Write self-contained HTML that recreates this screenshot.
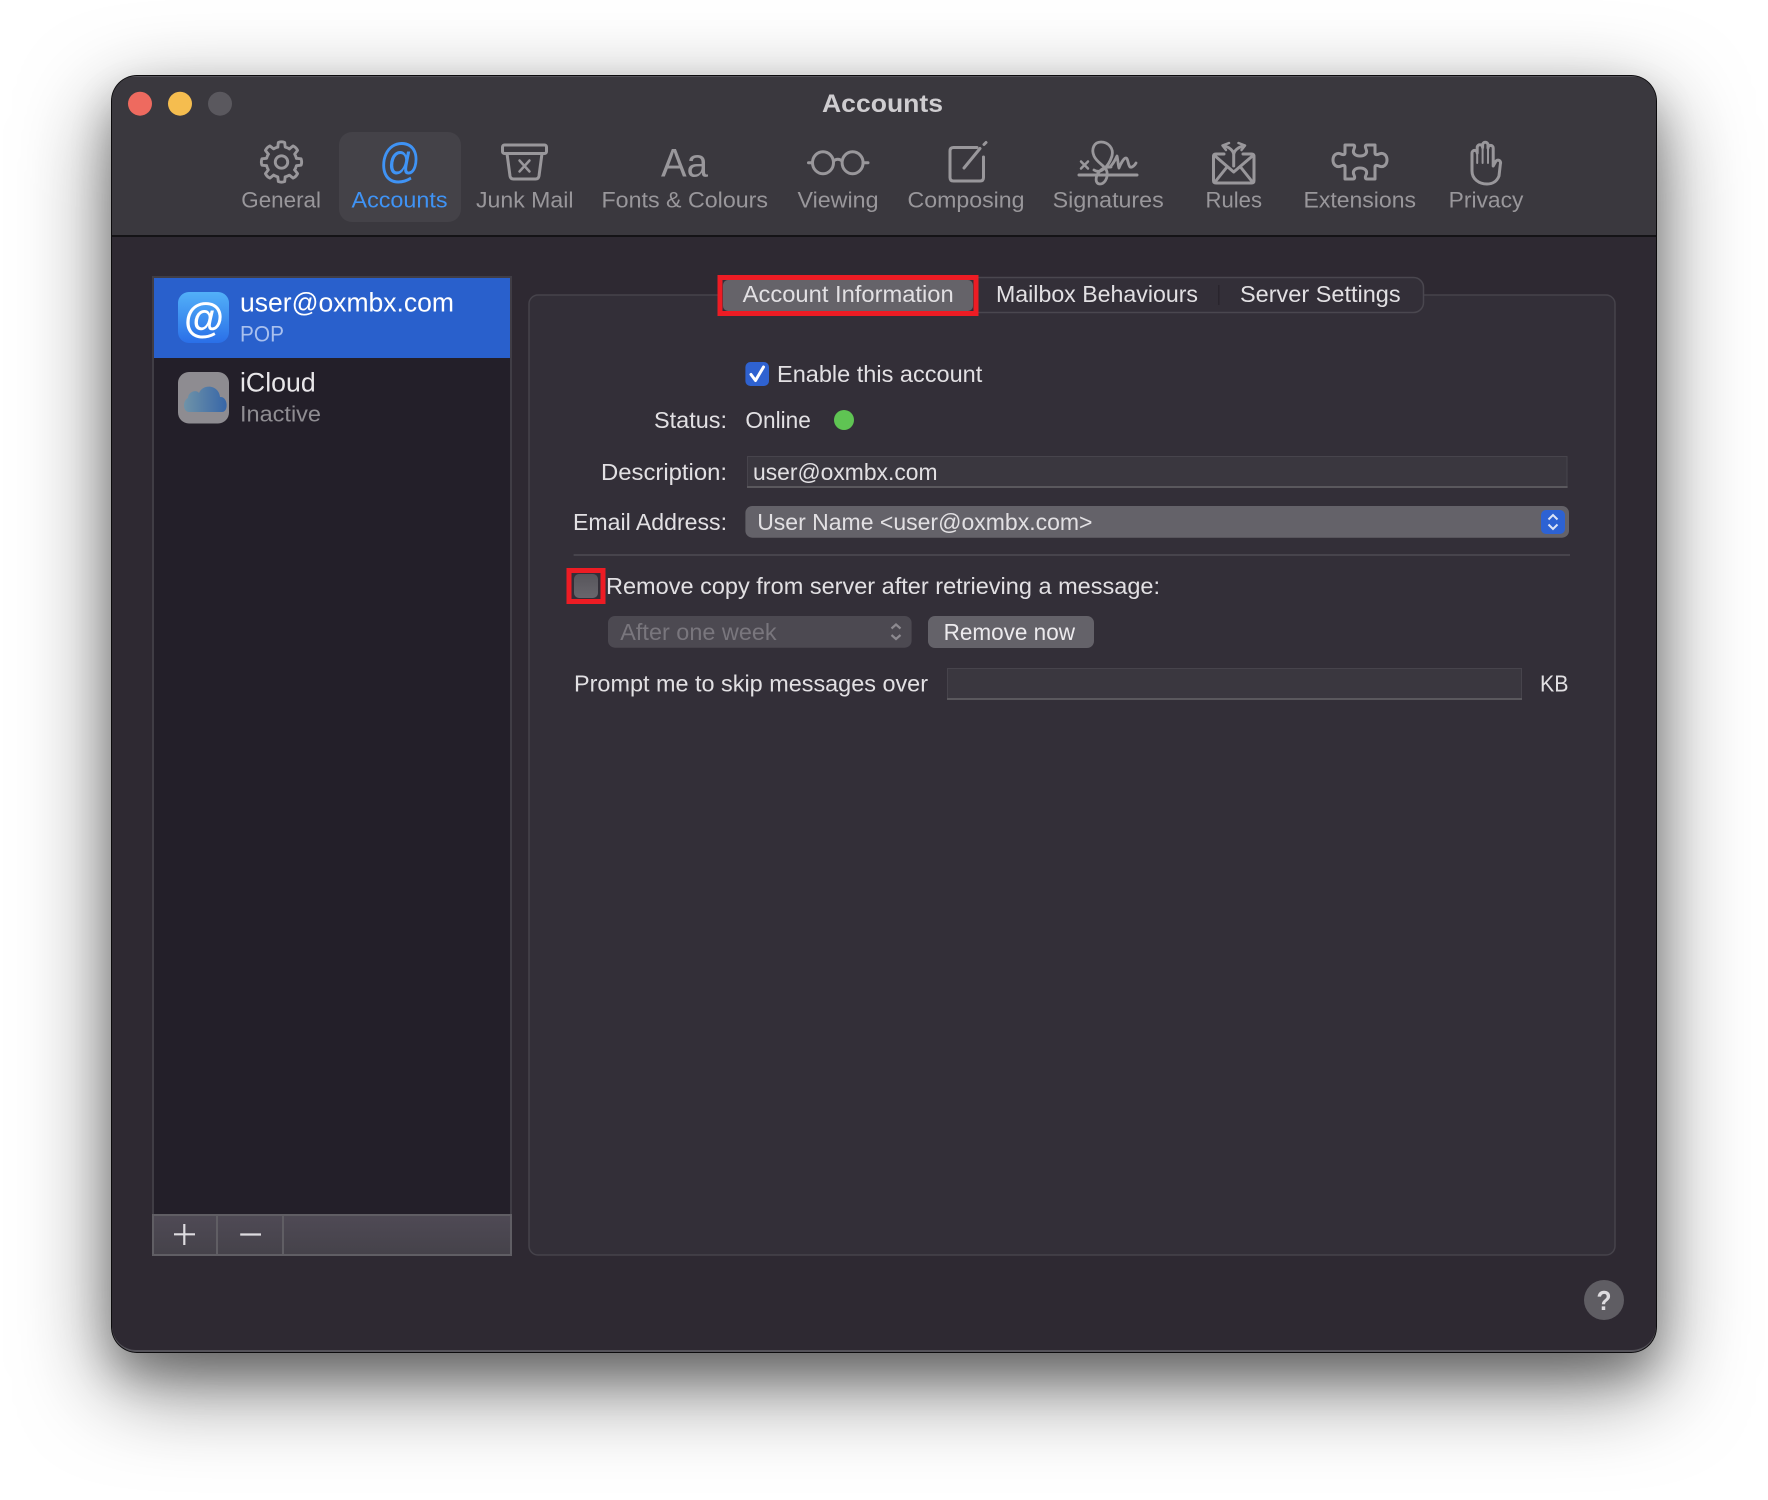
<!DOCTYPE html>
<html><head><meta charset="utf-8"><title>Accounts</title>
<style>
html,body{margin:0;padding:0;background:#fff;width:1768px;height:1500px;overflow:hidden}
#sh{position:absolute;left:111px;top:75px;width:1546px;height:1278px;border-radius:26px;box-shadow:0 32px 90px rgba(0,0,0,.55),0 22px 40px rgba(0,0,0,.24)}
svg{position:absolute;left:0;top:0}
text{font-family:"Liberation Sans",sans-serif;font-size:23px;fill:#e2e0e3}
.tb{fill:#99979b;font-size:22.5px}
.ic{fill:none;stroke:#99979b;stroke-width:3;stroke-linecap:round;stroke-linejoin:round}
</style></head><body>
<div id="sh"></div>
<svg width="1768" height="1500" viewBox="0 0 1768 1500" xmlns="http://www.w3.org/2000/svg">
<defs>
<clipPath id="win"><rect x="112" y="76" width="1544" height="1276" rx="25"/></clipPath>
<linearGradient id="at" x1="0" y1="0" x2="0" y2="1"><stop offset="0" stop-color="#52b0f8"/><stop offset="1" stop-color="#2a6fe8"/></linearGradient>
<linearGradient id="cl" x1="0" y1="0" x2="1" y2="0"><stop offset="0" stop-color="#6f93a8"/><stop offset="1" stop-color="#3766a8"/></linearGradient>
<linearGradient id="bar" x1="0" y1="0" x2="0" y2="1"><stop offset="0" stop-color="#4f4a55"/><stop offset="1" stop-color="#45424a"/></linearGradient>
<linearGradient id="cb" x1="0" y1="0" x2="0" y2="1"><stop offset="0" stop-color="#57555b"/><stop offset="1" stop-color="#68666c"/></linearGradient>
</defs>
<!-- window -->
<rect x="111" y="75" width="1546" height="1278" rx="26" fill="#0c0b0d"/>
<g clip-path="url(#win)">
<rect x="112" y="76" width="1544" height="1276" fill="#55535a"/>
<rect x="112" y="77" width="1544" height="1273" rx="24" fill="#2e2932"/>
<rect x="112" y="77" width="1544" height="158" fill="#3a383e"/>
<rect x="112" y="235" width="1544" height="2" fill="#141316"/>
</g>
<circle cx="140" cy="103.7" r="12" fill="#ee6a5f"/>
<circle cx="180" cy="103.7" r="12" fill="#f5bd4f"/>
<circle cx="220" cy="103.7" r="12" fill="#5a585e"/>
<text x="822" y="112" textLength="121" lengthAdjust="spacingAndGlyphs" font-weight="700" style="font-size:25px;fill:#cfcdd0">Accounts</text>

<!-- toolbar -->
<rect x="339" y="132" width="122" height="90" rx="13" fill="#444248"/>
<g class="ic">
<g transform="translate(281.500 162) scale(.96)">
<path d="M-3.87 -15.52L-3.29 -20.4Q0 -21.6 3.29 -20.4L3.87 -15.52A16 16 0 0 1 8.24 -13.71"/>
<path transform="rotate(45)" d="M-3.87 -15.52L-3.29 -20.4Q0 -21.6 3.29 -20.4L3.87 -15.52A16 16 0 0 1 8.24 -13.71"/>
<path transform="rotate(90)" d="M-3.87 -15.52L-3.29 -20.4Q0 -21.6 3.29 -20.4L3.87 -15.52A16 16 0 0 1 8.24 -13.71"/>
<path transform="rotate(135)" d="M-3.87 -15.52L-3.29 -20.4Q0 -21.6 3.29 -20.4L3.87 -15.52A16 16 0 0 1 8.24 -13.71"/>
<path transform="rotate(180)" d="M-3.87 -15.52L-3.29 -20.4Q0 -21.6 3.29 -20.4L3.87 -15.52A16 16 0 0 1 8.24 -13.71"/>
<path transform="rotate(225)" d="M-3.87 -15.52L-3.29 -20.4Q0 -21.6 3.29 -20.4L3.87 -15.52A16 16 0 0 1 8.24 -13.71"/>
<path transform="rotate(270)" d="M-3.87 -15.52L-3.29 -20.4Q0 -21.6 3.29 -20.4L3.87 -15.52A16 16 0 0 1 8.24 -13.71"/>
<path transform="rotate(315)" d="M-3.87 -15.52L-3.29 -20.4Q0 -21.6 3.29 -20.4L3.87 -15.52A16 16 0 0 1 8.24 -13.71"/>
<circle r="6.5"/>
</g>
<!-- junk -->
<rect x="502.5" y="145" width="44" height="8.5" rx="2"/>
<path d="M507 153.5L510 176Q510.5 179 513.5 179H535.5Q538.5 179 539 176L542 153.5"/>
<path d="M519.5 160.5L529.5 171.5M529.5 160.5L519.5 171.5" stroke-width="2.5"/>
<!-- glasses -->
<ellipse cx="823" cy="162.7" rx="10.5" ry="11"/>
<ellipse cx="852.6" cy="162.7" rx="10.5" ry="11"/>
<path d="M833.5 161Q837.8 157.5 842 161M812.5 162.7H808.5M863 162.7H868"/>
<!-- compose -->
<path d="M977 147.5H953.5Q950 147.5 950 151V177.5Q950 181 953.5 181H980Q983.5 181 983.5 177.5V157"/>
<path d="M964 168L980 148.500" />
<path d="M984 144.500L986 142.500" />
<!-- signature -->
<path d="M1079 175H1137"/>
<path d="M1081 161.5L1088 168.5M1088 161.5L1081 168.5" stroke-width="2.5"/>
<path d="M1094 170C1100 174 1108 168 1112 156C1114 148 1108 142 1101 142C1094 142 1091 149 1094 156C1097 163 1106 166 1107 172C1108 179 1104 184 1100 184C1095 184 1095 177 1099 172C1102 168 1106 167 1111 167" stroke-width="2.8"/>
<path d="M1110 167C1114 163 1116 158 1117 156C1118 160 1118 165 1119 168C1121 163 1124 158 1126 158C1128 158 1128 165 1130 167C1132 168 1135 165 1136 163" stroke-width="2.8"/>
<!-- rules -->
<path d="M1224 154H1216Q1213.5 154 1213.5 156.5V180.5Q1213.5 183 1216 183H1251.5Q1254 183 1254 180.5V156.5Q1254 154 1251.5 154H1243"/>
<path d="M1214.5 155.500L1233.7 172L1253 155.500M1215 182L1227 167M1252.500 182L1240.500 167"/>
<path d="M1233.700 166V155C1233.700 150.500 1229 147.500 1225 146M1233.700 155C1233.700 150.500 1238.500 147.500 1242.500 146"/>
<path d="M1229 143L1222.500 145.500L1226 150M1238.500 143L1245 145.500L1241.500 150" stroke-width="2.500"/>
<!-- puzzle -->
<path d="M1345 145H1353c2 0 2 2 1 4c-2 4 1 7 6 7s8-3 6-7c-1-2-1-4 1-4H1375V153c0 2 2 2 4 1c4-2 8 1 8 6s-4 8-8 6c-2-1-4-1-4 1V179H1367c-2 0-2-2-1-4c2-4-1-7-6-7s-8 3-6 7c1 2 1 4-1 4H1345V167c0-2-2-2-4-1c-4 2-8-1-8-6s4-8 8-6c2 1 4 1 4-1Z"/>
<!-- hand -->
<path d="M1472 171V153a2.600 2.600 0 0 1 5.200 0V147.500a2.700 2.700 0 0 1 5.400 0V145a2.700 2.700 0 0 1 5.400 0V148a2.600 2.600 0 0 1 5.200 0V166l2.500-4.500a2.600 2.600 0 0 1 4.700 2.200L1499 176c-2 5-6 8-12 8c-8 0-15-5-15-13Z"/>
<path d="M1477.200 153V163M1482.600 147.500V163M1488 145V163" stroke-width="2"/>
</g>
<text x="379" y="177" textLength="42" lengthAdjust="spacingAndGlyphs" style="font-size:48px;fill:#3f93f5">@</text>
<text x="661" y="176.700" textLength="47" lengthAdjust="spacingAndGlyphs" style="font-size:40px;fill:#99979b">Aa</text>
<text class="tb" x="241.300" y="207.700" textLength="79.700" lengthAdjust="spacingAndGlyphs">General</text>
<text class="tb" x="351.500" y="207.700" textLength="96" lengthAdjust="spacingAndGlyphs" style="fill:#3f93f5">Accounts</text>
<text class="tb" x="476" y="207.700" textLength="97.500" lengthAdjust="spacingAndGlyphs">Junk Mail</text>
<text class="tb" x="601.500" y="207.700" textLength="166.500" lengthAdjust="spacingAndGlyphs">Fonts &amp; Colours</text>
<text class="tb" x="797.500" y="207.700" textLength="81" lengthAdjust="spacingAndGlyphs">Viewing</text>
<text class="tb" x="907.500" y="207.700" textLength="117" lengthAdjust="spacingAndGlyphs">Composing</text>
<text class="tb" x="1052.700" y="207.700" textLength="111" lengthAdjust="spacingAndGlyphs">Signatures</text>
<text class="tb" x="1205.500" y="207.700" textLength="56.500" lengthAdjust="spacingAndGlyphs">Rules</text>
<text class="tb" x="1303.500" y="207.700" textLength="112.500" lengthAdjust="spacingAndGlyphs">Extensions</text>
<text class="tb" x="1448.700" y="207.700" textLength="74.700" lengthAdjust="spacingAndGlyphs">Privacy</text>

<!-- sidebar -->
<rect x="153" y="277" width="358" height="978" fill="#231f29" stroke="#403d45" stroke-width="2"/>
<rect x="154" y="278" width="356" height="80" fill="#2960cc"/>
<rect x="178" y="292" width="51" height="51" rx="11" fill="url(#at)"/>
<text x="184" y="332" textLength="40" lengthAdjust="spacingAndGlyphs" font-weight="700" style="font-size:42px;fill:#fff">@</text>
<text x="240" y="311.700" textLength="214" lengthAdjust="spacingAndGlyphs" style="font-size:26.500px;fill:#fff">user@oxmbx.com</text>
<text x="240" y="341.700" textLength="44" lengthAdjust="spacingAndGlyphs" style="font-size:22.500px;fill:#a9c0ee">POP</text>
<rect x="178" y="372" width="51" height="51.500" rx="11" fill="#8e8c91"/>
<path d="M189 412C183 412 182 401 188 398C188 392 196 389 199 393C203 383 219 385 220 397C228 396 229 412 222 412Z" fill="url(#cl)"/>
<text x="240" y="391.700" textLength="75.700" lengthAdjust="spacingAndGlyphs" style="font-size:26.500px;fill:#e8e6e9">iCloud</text>
<text x="240" y="421.700" textLength="81" lengthAdjust="spacingAndGlyphs" style="font-size:22.500px;fill:#8f8d92">Inactive</text>
<!-- add/remove bar -->
<rect x="153" y="1215" width="358" height="40" fill="url(#bar)" stroke="#605e64" stroke-width="2"/>
<path d="M217 1215V1255M283 1215V1255" stroke="#605e64" stroke-width="2"/>
<path d="M174 1234.300H195M184.300 1224V1245M240.200 1234.500H261" stroke="#dedce0" stroke-width="2.200" fill="none"/>

<!-- panel -->
<rect x="529" y="295" width="1086" height="960" rx="9" fill="#332f38" stroke="#46434b" stroke-width="1.500"/>
<!-- segmented -->
<rect x="723" y="277.500" width="700.500" height="35" rx="10" fill="#332f38" stroke="#4a474f" stroke-width="1.500"/>
<rect x="719.500" y="277" width="257" height="37" fill="#332f38" />
<rect x="723" y="280" width="250" height="31" rx="5" fill="#656369"/>
<rect x="720" y="277.500" width="256" height="36" fill="none" stroke="#ed1c24" stroke-width="5"/>
<path d="M1218.800 285V305" stroke="#29252d" stroke-width="1.500"/>
<text x="742.700" y="302" textLength="211" lengthAdjust="spacingAndGlyphs">Account Information</text>
<text x="996" y="302" textLength="202" lengthAdjust="spacingAndGlyphs">Mailbox Behaviours</text>
<text x="1240" y="302" textLength="160.600" lengthAdjust="spacingAndGlyphs">Server Settings</text>

<!-- form -->
<rect x="745.400" y="362" width="23.600" height="24" rx="5" fill="#2f62d0"/>
<path d="M751 374.500L755.500 380.500L763.500 367" fill="none" stroke="#fff" stroke-width="3" stroke-linecap="round" stroke-linejoin="round"/>
<text x="777" y="382" textLength="205.300" lengthAdjust="spacingAndGlyphs">Enable this account</text>
<text x="654" y="428" textLength="73" lengthAdjust="spacingAndGlyphs">Status:</text>
<text x="745.400" y="428" textLength="65.400" lengthAdjust="spacingAndGlyphs">Online</text>
<circle cx="844" cy="420" r="10" fill="#5fc453"/>
<text x="601" y="480" textLength="126" lengthAdjust="spacingAndGlyphs">Description:</text>
<rect x="747" y="456" width="820.600" height="31.700" fill="#3a373f"/>
<path d="M747.500 487V456.500H1567V487" fill="none" stroke="#47444c" stroke-width="1"/>
<path d="M747 487H1567.600" stroke="#5a585d" stroke-width="2"/>
<text x="753" y="480" textLength="184.500" lengthAdjust="spacingAndGlyphs">user@oxmbx.com</text>
<text x="573" y="530" textLength="154" lengthAdjust="spacingAndGlyphs">Email Address:</text>
<rect x="745.400" y="506" width="823.600" height="31.700" rx="7" fill="#646269"/>
<text x="757.200" y="530" textLength="335.300" lengthAdjust="spacingAndGlyphs">User Name &lt;user@oxmbx.com&gt;</text>
<rect x="1541" y="510" width="24" height="24" rx="5" fill="#2d62d3"/>
<path d="M1548.500 519.500L1553 515L1557.500 519.500M1548.500 524.500L1553 529L1557.500 524.500" fill="none" stroke="#dce4f6" stroke-width="2"/>
<path d="M573.600 555H1570" stroke="#47444c" stroke-width="2"/>

<rect x="569" y="570.500" width="34" height="31" fill="none" stroke="#ed1c24" stroke-width="5"/>
<rect x="574" y="574" width="24" height="24" rx="5" fill="url(#cb)"/>
<text x="606" y="594" textLength="554" lengthAdjust="spacingAndGlyphs">Remove copy from server after retrieving a message:</text>
<rect x="608" y="616" width="303.600" height="31.700" rx="7" fill="#4c4951"/>
<text x="620.300" y="640" textLength="156.300" lengthAdjust="spacingAndGlyphs" style="fill:#79767d">After one week</text>
<path d="M891.500 628.500L896 624.500L900.500 628.500M891.500 635L896 639L900.500 635" fill="none" stroke="#8d8a90" stroke-width="2.200"/>
<rect x="928" y="616" width="166" height="32" rx="7" fill="#646269"/>
<text x="943.600" y="640" textLength="131.400" lengthAdjust="spacingAndGlyphs" style="fill:#eceaed">Remove now</text>
<text x="574" y="691.700" textLength="354" lengthAdjust="spacingAndGlyphs">Prompt me to skip messages over</text>
<rect x="947" y="668" width="575" height="31.700" fill="#3a373f"/>
<path d="M947.500 699V668.500H1521.500V699" fill="none" stroke="#47444c" stroke-width="1"/>
<path d="M947 699H1522" stroke="#5a585d" stroke-width="2"/>
<text x="1540" y="691.700" textLength="28.500" lengthAdjust="spacingAndGlyphs">KB</text>

<!-- help -->
<circle cx="1604" cy="1300" r="20" fill="#5f5d63"/>
<text x="1596.500" y="1310" textLength="15" lengthAdjust="spacingAndGlyphs" font-weight="700" style="font-size:28px;fill:#dedce0">?</text>
</svg>
</body></html>
